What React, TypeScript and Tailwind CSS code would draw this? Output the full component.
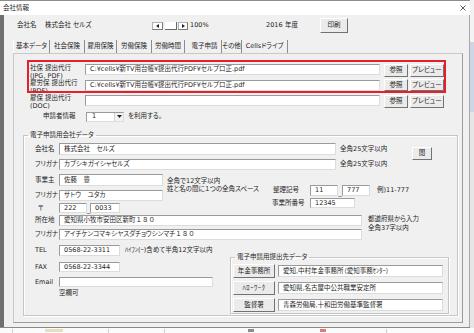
import React from "react";

const inp =
  "bg-white border border-t-[#9a9a9a] border-l-[#9a9a9a] border-r-[#dcdcdc] border-b-[#dcdcdc] flex items-center pl-[4px] whitespace-nowrap overflow-hidden shrink-0";
const btn =
  "bg-[#ebebeb] border border-t-white border-l-white border-r-[#727272] border-b-[#727272] flex items-center justify-center shrink-0 whitespace-nowrap";

function Tab({ label, className }: { label: string; className: string }) {
  return (
    <div className={"h-[13px] flex items-center justify-center whitespace-nowrap border-r border-[#8c8c8c] " + className}>
      {label}
    </div>
  );
}

export default function App() {
  return (
    <div className="w-[474px] h-[333px] overflow-hidden bg-white flex flex-col font-['DejaVu_Sans','Noto_Sans_CJK_JP',sans-serif] [font-feature-settings:'palt'] text-[6.5px] leading-none text-[#1e1e1e]">
      <div className="flex h-[328px] shrink-0">
        {/* dialog window */}
        <div className="w-[470px] h-[328px] flex flex-col border-b border-[#8a8a8a]">
          {/* title bar */}
          <div className="h-[15px] shrink-0 bg-white border-t border-[#8c8c8c] flex items-center justify-between">
            <span className="ml-[3px]">会社情報</span>
            <svg className="mr-[4px]" width="6" height="6" viewBox="0 0 6 6">
              <path d="M0.5 0.5L5.5 5.5M5.5 0.5L0.5 5.5" stroke="#333" strokeWidth="0.8" />
            </svg>
          </div>
          <div className="flex flex-1 min-h-0">
            <div className="w-[4px] bg-[#6f6f6f]" />
            <div className="flex-1 bg-[#f0f0f0] flex flex-col border-r border-[#a8a8a8]">
              {/* header row */}
              <div className="mt-[3px] h-[15px] flex items-center">
                <span className="ml-[13px] w-[28px]">会社名</span>
                <span className="w-[107px]">株式会社 セルズ</span>
                <div className="w-[36px] h-[8px] flex items-center">
                  <div className="w-[11px] h-[8px] bg-white border border-[#b0b0b0] border-r-[#7a7a7a] border-b-[#7a7a7a] flex items-center justify-center">
                    <svg width="3" height="4" viewBox="0 0 3 4">
                      <path d="M3 0V4L0 2Z" fill="#222" />
                    </svg>
                  </div>
                  <div className="ml-[2px] w-[12px] h-[8px] bg-white border-b border-r border-[#6a6a6a]" />
                  <div className="ml-[1px] w-[10px] h-[8px] bg-white border border-[#b0b0b0] border-r-[#7a7a7a] border-b-[#7a7a7a] flex items-center justify-center">
                    <svg width="3" height="4" viewBox="0 0 3 4">
                      <path d="M0 0V4L3 2Z" fill="#222" />
                    </svg>
                  </div>
                </div>
                <span className="ml-[2px] w-[76px]">100%</span>
                <span className="w-[19px]">2016</span>
                <span className="w-[35px]">年度</span>
                <div className={btn + " w-[28px] h-[15px]"}>印刷</div>
              </div>

              {/* tabs */}
              <div className="mt-[5px] h-[15px] flex items-end ml-[9px]">
                <Tab label="基本データ" className="w-[37px] border-l border-l-white" />
                <Tab label="社会保険" className="w-[35px]" />
                <Tab label="雇用保険" className="w-[32px]" />
                <Tab label="労働保険" className="w-[35px]" />
                <Tab label="労働時間" className="w-[33px]" />
                <Tab label="電子申請" className="w-[37px] pl-[3px]" />
                <Tab label="その他" className="w-[20px]" />
                <Tab label="Cellsドライブ" className="w-[46px]" />
              </div>

              {/* tab panel */}
              <div className="ml-[9px] w-[450px] h-[270px] border border-t-[#c8c8c8] border-l-[#c8c8c8] border-r-[#9c9c9c] border-b-[#9c9c9c] flex flex-col">
                {/* red highlighted rows */}
                <div className="ml-[13px] mt-[6px] w-[419px] h-[33px] border-2 border-[#e3202c] overflow-hidden flex flex-col">
                  <div className="mt-[1px] h-[15px] flex items-start">
                    <div className="w-[56px] pl-[1px] pt-[1px] leading-[8px] whitespace-nowrap">
                      <div>社保 提出代行</div>
                      <div>(JPG, PDF)</div>
                    </div>
                    <div className={inp + " mt-[1px] w-[295px] h-[11px]"}>C:¥cells¥新TV用台帳¥提出代行PDF¥セルプロ正.pdf</div>
                    <div className={btn + " ml-[4px] mt-[1px] w-[24px] h-[13px]"}>参照</div>
                    <div className={btn + " ml-[2px] mt-[1px] w-[34px] h-[13px]"}>プレビュー</div>
                  </div>
                  <div className="mt-[1px] h-[12px] flex items-start">
                    <div className="w-[56px] pl-[1px] leading-[8px] whitespace-nowrap">
                      <div>雇労保 提出代行</div>
                      <div>(PDF)</div>
                    </div>
                    <div className={inp + " mt-[1px] w-[295px] h-[11px]"}>C:¥cells¥新TV用台帳¥提出代行PDF¥セルプロ正.pdf</div>
                    <div className={btn + " ml-[4px] w-[24px] h-[12px]"}>参照</div>
                    <div className={btn + " ml-[2px] w-[34px] h-[12px]"}>プレビュー</div>
                  </div>
                </div>

                {/* row C */}
                <div className="ml-[16px] mt-[2px] h-[13px] flex items-start">
                  <div className="w-[55px] -mt-[1px] leading-[8px] whitespace-nowrap">
                    <div>雇保 提出代行</div>
                    <div>(DOC)</div>
                  </div>
                  <div className={inp + " w-[295px] h-[11px]"} />
                  <div className={btn + " ml-[4px] w-[24px] h-[13px]"}>参照</div>
                  <div className={btn + " ml-[2px] w-[34px] h-[13px]"}>プレビュー</div>
                </div>

                {/* row D */}
                <div className="ml-[29px] mt-[3px] h-[11px] flex items-center">
                  <span className="w-[43px]">申請者情報</span>
                  <div className="w-[38px] h-[10px] bg-white border border-t-[#9a9a9a] border-l-[#9a9a9a] border-r-[#dcdcdc] border-b-[#dcdcdc] flex items-center">
                    <span className="pl-[5px] flex-1">1</span>
                    <div className="w-[9px] h-full bg-[#f2f2f2] border-l border-[#d4d4d4] flex items-center justify-center">
                      <svg width="5" height="3" viewBox="0 0 5 3">
                        <path d="M0 0H5L2.5 3Z" fill="#222" />
                      </svg>
                    </div>
                  </div>
                  <span className="ml-[4px]">を利用する。</span>
                </div>

                {/* group: 電子申請用会社データ */}
                <fieldset className="ml-[9px] mt-[8px] w-[435px] h-[186px] border border-[#c6c6c6] shadow-[inset_1px_1px_0_#ffffff,1px_1px_0_#ffffff] flex flex-col">
                  <legend className="ml-[4px] px-[2px] leading-[10px]">電子申請用会社データ</legend>

                  {/* block 1 */}
                  <div className="mt-[3px] flex">
                    <div className="w-[388px] pl-[11px] flex flex-col">
                      <div className="h-[12px] flex items-center">
                        <span className="w-[24px]">会社名</span>
                        <div className={inp + " w-[277px] h-[12px]"}>株式会社　セルズ</div>
                        <span className="ml-[4px]">全角25文字以内</span>
                      </div>
                      <div className="mt-[4px] h-[11px] flex items-center">
                        <span className="w-[24px] whitespace-nowrap">フリガナ</span>
                        <div className={inp + " w-[277px] h-[11px]"}>カブシキガイシャセルズ</div>
                        <span className="ml-[4px]">全角25文字以内</span>
                      </div>
                    </div>
                    <div className={btn + " mt-[4px] w-[20px] h-[13px]"}>閲</div>
                  </div>

                  {/* block 2 */}
                  <div className="mt-[4px] flex">
                    <div className="w-[249px] pl-[11px] flex flex-col">
                      <div className="h-[12px] flex items-start">
                        <span className="w-[24px] h-[12px] flex items-center">事業主</span>
                        <div className={inp + " w-[104px] h-[12px]"}>佐藤　豊</div>
                        <div className="ml-[4px] mt-[3px] leading-[8px] whitespace-nowrap">
                          <div>全角で12文字以内</div>
                          <div>姓と名の間に１つの全角スペース</div>
                        </div>
                      </div>
                      <div className="mt-[4px] h-[11px] flex items-center">
                        <span className="w-[24px] whitespace-nowrap">フリガナ</span>
                        <div className={inp + " w-[104px] h-[11px]"}>サトウ　ユタカ</div>
                      </div>
                      <div className="mt-[2px] h-[10px] flex items-center">
                        <span className="w-[24px] pl-[3px]">〒</span>
                        <div className={inp + " w-[28px] h-[10px]"}>222</div>
                        <span className="w-[3px] self-end">_</span>
                        <div className={inp + " w-[30px] h-[10px]"}>0033</div>
                      </div>
                    </div>
                    <div className="mt-[11px] flex flex-col">
                      <div className="h-[11px] flex items-center">
                        <span className="w-[37px]">整理記号</span>
                        <div className={inp + " w-[28px] h-[11px]"}>11</div>
                        <span className="w-[4px] self-end text-center">_</span>
                        <div className={inp + " w-[28px] h-[11px]"}>777</div>
                        <span className="ml-[7px]">例)11-777</span>
                      </div>
                      <div className="mt-[2px] h-[10px] flex items-center">
                        <span className="w-[37px] -ml-[1px] whitespace-nowrap">事業所番号</span>
                        <div className={inp + " ml-[1px] w-[45px] h-[10px]"}>12345</div>
                      </div>
                    </div>
                  </div>

                  {/* block 3 */}
                  <div className="mt-[2px] flex">
                    <div className="pl-[11px] flex flex-col">
                      <div className="h-[11px] flex items-center">
                        <span className="w-[24px]">所在地</span>
                        <div className={inp + " w-[303px] h-[11px]"}>
                          愛知県小牧市安田区新町<span className="[font-feature-settings:normal]">１８０</span>
                        </div>
                      </div>
                      <div className="mt-[3px] h-[11px] flex items-center">
                        <span className="w-[24px] whitespace-nowrap">フリガナ</span>
                        <div className={inp + " w-[303px] h-[11px]"}>
                          アイチケンコマキシヤスダチョウシンマチ<span className="[font-feature-settings:normal]">１８０</span>
                        </div>
                      </div>
                    </div>
                    <div className="ml-[6px] leading-[9px] whitespace-nowrap">
                      <div>都道府県から入力</div>
                      <div>全角37字以内</div>
                    </div>
                  </div>

                  {/* block 4 */}
                  <div className="mt-[5px] flex">
                    <div className="w-[206px] pl-[11px] flex flex-col">
                      <div className="h-[11px] flex items-center">
                        <span className="w-[24px]">TEL</span>
                        <div className={inp + " w-[61px] h-[11px]"}>0568-22-3311</div>
                        <span className="ml-[5px] whitespace-nowrap">ﾊｲﾌﾝ(ｰ)含めて半角12文字以内</span>
                      </div>
                      <div className="mt-[6px] h-[10px] flex items-center">
                        <span className="w-[24px]">FAX</span>
                        <div className={inp + " w-[61px] h-[10px]"}>0568-22-3344</div>
                      </div>
                      <div className="mt-[5px] h-[10px] flex items-center">
                        <span className="w-[24px]">Email</span>
                        <div className={inp + " w-[154px] h-[10px]"} />
                      </div>
                      <div className="mt-[2px] pl-[24px] leading-[8px]">空欄可</div>
                    </div>
                    <fieldset className="mt-[7px] w-[219px] h-[62px] border border-[#c6c6c6] shadow-[inset_1px_1px_0_#ffffff,1px_1px_0_#ffffff] flex flex-col">
                      <legend className="ml-[4px] px-[2px] leading-[10px]">電子申請用提出先データ</legend>
                      <div className="mt-[2px] h-[14px] flex items-start">
                        <div className={btn + " ml-[2px] w-[42px] h-[14px]"}>年金事務所</div>
                        <div className={inp + " ml-[3px] mt-[1px] w-[165px] h-[12px]"}>愛知,中村年金事務所（愛知事務ｾﾝﾀｰ）</div>
                      </div>
                      <div className="mt-[3px] h-[14px] flex items-start">
                        <div className={btn + " ml-[2px] w-[42px] h-[14px] tracking-[0.6px]"}>ﾊﾛｰﾜｰｸ</div>
                        <div className={inp + " ml-[3px] mt-[1px] w-[165px] h-[12px]"}>愛知県,名古屋中公共職業安定所</div>
                      </div>
                      <div className="mt-[3px] h-[14px] flex items-start">
                        <div className={btn + " ml-[2px] w-[42px] h-[14px]"}>監督署</div>
                        <div className={inp + " ml-[3px] mt-[1px] w-[165px] h-[12px]"}>青森労働局,十和田労働基準監督署</div>
                      </div>
                    </fieldset>
                  </div>
                </fieldset>
              </div>
            </div>
          </div>
        </div>
        {/* outside strip on the right */}
        <div className="w-[4px] flex flex-col">
          <div className="h-[42px] bg-[#f3f3f3]" />
          <div className="h-[70px] bg-[#cdd6e6]" />
          <div className="flex-1 bg-[#e6e6e6]" />
        </div>
      </div>
      {/* worksheet behind, bottom strip */}
      <div className="flex-1 bg-[#fbfbfb] flex items-start">
        <div className="ml-[12px] mt-[1px] w-[1px] h-[4px] bg-[#cfcfcf]" />
        <div className="ml-[32px] mt-[1px] w-[18px] h-[3px] bg-[#e6dfb8]" />
        <div className="ml-[45px] mt-[1px] w-[1px] h-[4px] bg-[#cfcfcf]" />
        <div className="ml-[55px] mt-[1px] w-[1px] h-[4px] bg-[#cfcfcf]" />
        <div className="ml-[83px] mt-[1px] w-[6px] h-[3px] bg-[#8c8c8c]" />
        <div className="ml-[66px] mt-[1px] w-[6px] h-[3px] bg-[#e07a7a]" />
        <div className="ml-[60px] mt-[1px] w-[1px] h-[4px] bg-[#cfcfcf]" />
      </div>
    </div>
  );
}
